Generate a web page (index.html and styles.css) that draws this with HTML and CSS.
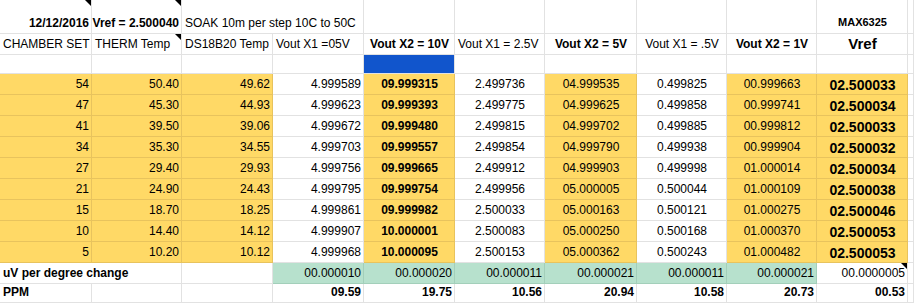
FILE: index.html
```html
<!DOCTYPE html>
<html>
<head>
<meta charset="utf-8">
<link rel="stylesheet" href="styles.css">
</head>
<body>
<div class="sheet">
  <!-- row 1 -->
  <div class="c r b note">12/12/2016</div>
  <div class="c r b note">Vref = 2.500040</div>
  <div class="c span2">SOAK 10m per step 10C to 50C</div>
  <div class="c"></div>
  <div class="c"></div>
  <div class="c"></div>
  <div class="c"></div>
  <div class="c"></div>
  <div class="c m b small">MAX6325</div>
  <div class="c"></div>
  <!-- row 2 -->
  <div class="c">CHAMBER SET</div>
  <div class="c note">THERM Temp</div>
  <div class="c">DS18B20 Temp</div>
  <div class="c">Vout X1 =05V</div>
  <div class="c m b">Vout X2 = 10V</div>
  <div class="c">Vout X1 = 2.5V</div>
  <div class="c m b">Vout X2 = 5V</div>
  <div class="c m">Vout X1 = .5V</div>
  <div class="c m b">Vout X2 = 1V</div>
  <div class="c m b big">Vref</div>
  <div class="c"></div>
  <!-- row 3 -->
  <div class="c"></div>
  <div class="c"></div>
  <div class="c"></div>
  <div class="c"></div>
  <div class="c blue"></div>
  <div class="c"></div>
  <div class="c"></div>
  <div class="c"></div>
  <div class="c"></div>
  <div class="c"></div>
  <div class="c"></div>
  <!-- data rows -->
  <div class="c r y">54</div><div class="c r y">50.40</div><div class="c r y">49.62</div><div class="c r">4.999589</div><div class="c m y b">09.999315</div><div class="c m">2.499736</div><div class="c m y">04.999535</div><div class="c m">0.499825</div><div class="c m y">00.999663</div><div class="c m y b vr">02.500033</div><div class="c"></div>
  <div class="c r y">47</div><div class="c r y">45.30</div><div class="c r y">44.93</div><div class="c r">4.999623</div><div class="c m y b">09.999393</div><div class="c m">2.499775</div><div class="c m y">04.999625</div><div class="c m">0.499858</div><div class="c m y">00.999741</div><div class="c m y b vr">02.500034</div><div class="c"></div>
  <div class="c r y">41</div><div class="c r y">39.50</div><div class="c r y">39.06</div><div class="c r">4.999672</div><div class="c m y b">09.999480</div><div class="c m">2.499815</div><div class="c m y">04.999702</div><div class="c m">0.499885</div><div class="c m y">00.999812</div><div class="c m y b vr">02.500033</div><div class="c"></div>
  <div class="c r y">34</div><div class="c r y">35.30</div><div class="c r y">34.55</div><div class="c r">4.999703</div><div class="c m y b">09.999557</div><div class="c m">2.499854</div><div class="c m y">04.999790</div><div class="c m">0.499938</div><div class="c m y">00.999904</div><div class="c m y b vr">02.500032</div><div class="c"></div>
  <div class="c r y">27</div><div class="c r y">29.40</div><div class="c r y">29.93</div><div class="c r">4.999756</div><div class="c m y b">09.999665</div><div class="c m">2.499912</div><div class="c m y">04.999903</div><div class="c m">0.499998</div><div class="c m y">01.000014</div><div class="c m y b vr">02.500034</div><div class="c"></div>
  <div class="c r y">21</div><div class="c r y">24.90</div><div class="c r y">24.43</div><div class="c r">4.999795</div><div class="c m y b">09.999754</div><div class="c m">2.499956</div><div class="c m y">05.000005</div><div class="c m">0.500044</div><div class="c m y">01.000109</div><div class="c m y b vr">02.500038</div><div class="c"></div>
  <div class="c r y">15</div><div class="c r y">18.70</div><div class="c r y">18.25</div><div class="c r">4.999861</div><div class="c m y b">09.999982</div><div class="c m">2.500033</div><div class="c m y">05.000163</div><div class="c m">0.500121</div><div class="c m y">01.000275</div><div class="c m y b vr">02.500046</div><div class="c"></div>
  <div class="c r y">10</div><div class="c r y">14.40</div><div class="c r y">14.12</div><div class="c r">4.999907</div><div class="c m y b">10.000001</div><div class="c m">2.500083</div><div class="c m y">05.000250</div><div class="c m">0.500168</div><div class="c m y">01.000370</div><div class="c m y b vr">02.500053</div><div class="c"></div>
  <div class="c r y">5</div><div class="c r y">10.20</div><div class="c r y">10.12</div><div class="c r">4.999968</div><div class="c m y b">10.000095</div><div class="c m">2.500153</div><div class="c m y">05.000362</div><div class="c m">0.500243</div><div class="c m y">01.000482</div><div class="c m y b vr">02.500053</div><div class="c"></div>
  <!-- uV row -->
  <div class="c b span2">uV per degree change</div>
  <div class="c"></div>
  <div class="c r g">00.000010</div>
  <div class="c r g">00.000020</div>
  <div class="c r g">00.000011</div>
  <div class="c r g">00.000021</div>
  <div class="c r g">00.000011</div>
  <div class="c r g">00.000021</div>
  <div class="c r note">00.0000005</div>
  <div class="c"></div>
  <!-- PPM row -->
  <div class="c b">PPM</div>
  <div class="c"></div>
  <div class="c"></div>
  <div class="c r b">09.59</div>
  <div class="c r b">19.75</div>
  <div class="c r b">10.56</div>
  <div class="c r b">20.94</div>
  <div class="c r b">10.58</div>
  <div class="c r b">20.73</div>
  <div class="c r b">00.53</div>
  <div class="c"></div>
  <!-- partial row at the bottom edge -->
  <div class="c edge note"></div>
  <div class="c edge note"></div>
  <div class="c edge"></div>
  <div class="c edge"></div>
  <div class="c edge"></div>
  <div class="c edge"></div>
  <div class="c edge"></div>
  <div class="c edge"></div>
  <div class="c edge"></div>
  <div class="c edge"></div>
  <div class="c edge"></div>
</div>
</body>
</html>
```

FILE: styles.css
```css
html, body {
  margin: 0;
  padding: 0;
  background: #ffffff;
}

body {
  font-family: "Liberation Sans", Arial, sans-serif;
  font-size: 12px;
  color: #000000;
  overflow: hidden;
}

.sheet {
  display: grid;
  grid-template-columns: 92px 90px 91px 91px 91px 90px 92px 90px 90px 91px 1fr;
  grid-template-rows: 34px 21px 19px repeat(9, 21px) 21px 19px 2px;
}

.c {
  box-sizing: border-box;
  position: relative;
  display: flex;
  align-items: flex-end;
  justify-content: flex-start;
  padding: 0 2px 3px 3px;
  border-right: 1px solid #e2e2e2;
  border-bottom: 1px solid #e2e2e2;
  white-space: nowrap;
  line-height: 14px;
  overflow: visible;
}

.edge {
  overflow: hidden;
  border-bottom: 0;
  padding: 0;
}

.span2 {
  grid-column: span 2;
}

.r {
  justify-content: flex-end;
}

.m {
  justify-content: center;
}

.b {
  font-weight: bold;
}

.small {
  font-size: 11px;
  padding-bottom: 4px;
}

.big {
  font-size: 15px;
  padding-bottom: 3px;
}

.vr {
  font-size: 14px;
  padding-bottom: 2px;
}

.y {
  background: #ffd966;
  border-color: #e8c35d;
}

.g {
  background: #b7e1cd;
  border-color: #a3cfba;
}

.blue {
  background: #1155cc;
}

.note::after {
  content: "";
  position: absolute;
  top: 0;
  right: 0;
  width: 0;
  height: 0;
  border-top: 6px solid #000000;
  border-left: 6px solid transparent;
}
```
